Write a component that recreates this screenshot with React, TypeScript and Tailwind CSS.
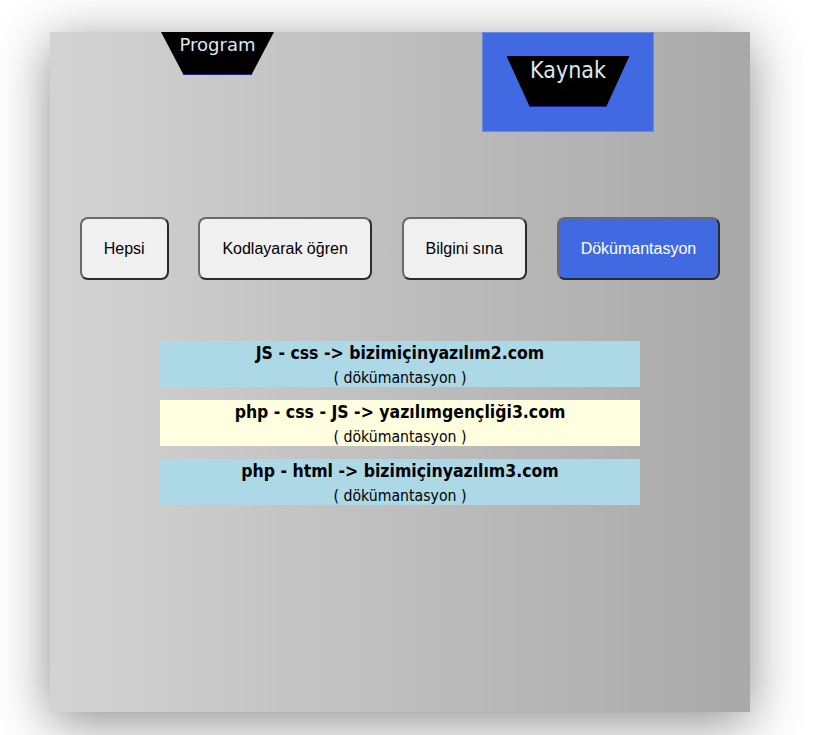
import React, { useState } from 'react'

const categories = ['Hepsi', 'Kodlayarak öğren', 'Bilgini sına', 'Dökümantasyon']

const items = [
  { title: 'JS - css -> bizimiçinyazılım2.com', note: '( dökümantasyon )', tone: 'blue' },
  { title: 'php - css - JS -> yazılımgençliği3.com', note: '( dökümantasyon )', tone: 'yellow' },
  { title: 'php - html -> bizimiçinyazılım3.com', note: '( dökümantasyon )', tone: 'blue' },
]

export default function App() {
  const [active, setActive] = useState('Dökümantasyon')

  return (
    <div className="min-h-[735px] bg-white pt-[32px] pl-[50px]">
      <div className="w-[700px] h-[680px] bg-gradient-to-r from-[#d3d3d3] to-[#a9a9a9] shadow-[0_10px_50px_rgba(0,0,0,0.45)] font-['DejaVu_Sans_Condensed','DejaVu_Sans',sans-serif]">
        {/* top tabs */}
        <div className="flex items-start">
          <div className="ml-[111px] w-[113px] h-[43px] bg-black border-b border-[#1c1c9c] [clip-path:polygon(0_0,100%_0,80%_100%,20%_100%)] flex justify-center">
            <span className="text-[#dfe6ee] text-[18px] leading-[24px] mt-[1px] font-['DejaVu_Sans',sans-serif]">Program</span>
          </div>
          <div className="ml-[208px] w-[172px] h-[100px] bg-[#4169e1] border border-[#6d88e0] flex justify-center pt-[23px]">
            <div className="w-[123px] h-[51px] bg-black border-b border-[#1c1c9c] [clip-path:polygon(0_0,100%_0,81%_100%,19%_100%)] flex justify-center">
              <span className="text-[#dfe6ee] text-[23px] leading-[28px]">Kaynak</span>
            </div>
          </div>
        </div>

        {/* filter buttons */}
        <div className="mt-[85px] flex justify-evenly font-['Liberation_Sans',Arial,sans-serif]">
          {categories.map(cat => (
            <button
              key={cat}
              onClick={() => setActive(cat)}
              className={`px-[22px] py-[20px] text-[16px] leading-[19px] rounded-[8px] border-2 border-t-[#6a6a6a] border-l-[#6a6a6a] border-r-[#2b2b2b] border-b-[#2b2b2b] h-[63px] ${
                active === cat ? 'bg-[#4169e1] text-white' : 'bg-[#f0f0f0] text-black'
              }`}
            >
              {cat}
            </button>
          ))}
        </div>

        {/* resource list */}
        <div className="mt-[61px] flex flex-col items-center gap-[13px]">
          {items.map(item => (
            <div
              key={item.title}
              className={`w-[480px] h-[46px] flex flex-col items-center text-black ${
                item.tone === 'blue' ? 'bg-[#add8e6]' : 'bg-[#ffffe0]'
              }`}
            >
              <span className="font-bold text-[17.5px] leading-[24px]">{item.title}</span>
              <span className="text-[15.7px] leading-[18px] mt-[4px]">{item.note}</span>
            </div>
          ))}
        </div>
      </div>
    </div>
  )
}
